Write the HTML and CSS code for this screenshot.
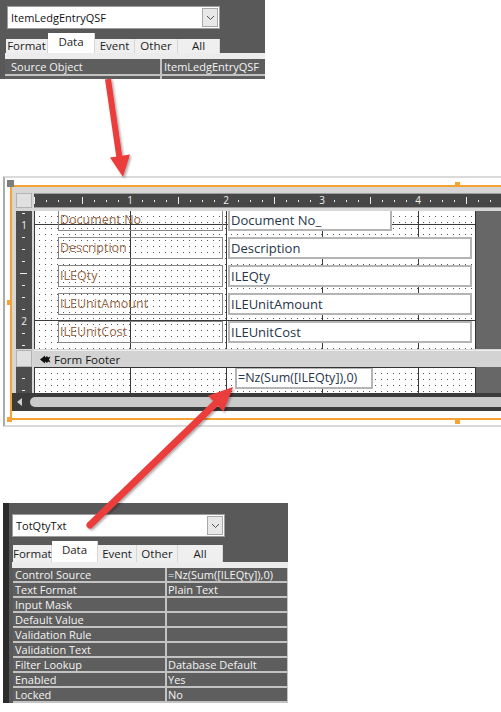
FILE: index.html
```html
<!DOCTYPE html>
<html>
<head>
<meta charset="utf-8">
<title>Access design view</title>
<link rel="stylesheet" href="styles.css">
</head>
<body>
<div class="page">
  <section class="props props-top">
    <div class="combo">
      <span class="combo-text">ItemLedgEntryQSF</span>
      <span class="combo-btn"><svg width="9" height="6" viewBox="0 0 9 6"><polyline points="1,1 4.5,4.5 8,1" fill="none" stroke="#555" stroke-width="1"/></svg></span>
    </div>
    <div class="tabs">
      <span class="tab t1">Format</span><span class="tab t2 active">Data</span><span class="tab t3">Event</span><span class="tab t4">Other</span><span class="tab t5">All</span>
    </div>
    <div class="strip"></div>
    <div class="plist">
      <span class="cell name">Source Object</span><span class="cell val">ItemLedgEntryQSF</span>
      <span class="cell name">Link Master Fields</span><span class="cell val">Document No</span>
    </div>
  </section>

  <section class="design">
    <div class="sel">
      <div class="win">
        <div class="rrow">
          <div class="corner"></div>
          <div class="hruler"><span class="rn">1</span><span class="rn">2</span><span class="rn">3</span><span class="rn">4</span></div>
        </div>
        <div class="sec detail">
          <div class="vruler"><span class="vn first">1</span><span class="vn second">2</span></div>
          <div class="grid">
            <div class="frow"><div class="lbl">Document No</div><div class="tb short">Document No_</div></div>
            <div class="frow"><div class="lbl">Description</div><div class="tb">Description</div></div>
            <div class="frow"><div class="lbl">ILEQty</div><div class="tb">ILEQty</div></div>
            <div class="frow"><div class="lbl">ILEUnitAmount</div><div class="tb">ILEUnitAmount</div></div>
            <div class="frow"><div class="lbl">ILEUnitCost</div><div class="tb">ILEUnitCost</div></div>
          </div>
          <div class="gutter"></div>
        </div>
        <div class="footbar">
          <div class="corner"></div>
          <div class="bar"><svg class="secicon" width="11" height="9" viewBox="0 0 11 9"><path d="M0 4.5 L5 0.5 L5 2.5 L7 1 L8 2.5 L10.5 1.5 L9 4.5 L10.5 7.5 L8 6.5 L7 8 L5 6.5 L5 8.5 Z" fill="#111"/></svg><span>Form Footer</span></div>
        </div>
        <div class="sec footer">
          <div class="vruler small"></div>
          <div class="grid fgrid"><div class="tb calc">=Nz(Sum([ILEQty]),0)</div></div>
          <div class="gutter"></div>
        </div>
        <div class="hscroll"><span class="sarrow"></span><span class="track"></span></div>
      </div>
    </div>
    <span class="tlsq"></span>
    <span class="handle h-top"></span>
    <span class="handle h-bot"></span>
    <span class="handle h-left"></span>
    <span class="handle h-bl"></span>
  </section>

  <section class="props props-bot">
    <div class="combo">
      <span class="combo-text">TotQtyTxt</span>
      <span class="combo-btn"><svg width="9" height="6" viewBox="0 0 9 6"><polyline points="1,1 4.5,4.5 8,1" fill="none" stroke="#555" stroke-width="1"/></svg></span>
    </div>
    <div class="tabs">
      <span class="tab t1">Format</span><span class="tab t2 active">Data</span><span class="tab t3">Event</span><span class="tab t4">Other</span><span class="tab t5">All</span>
    </div>
    <div class="strip"></div>
    <div class="plist">
      <span class="cell name">Control Source</span><span class="cell val">=Nz(Sum([ILEQty]),0)</span>
      <span class="cell name">Text Format</span><span class="cell val">Plain Text</span>
      <span class="cell name">Input Mask</span><span class="cell val"></span>
      <span class="cell name">Default Value</span><span class="cell val"></span>
      <span class="cell name">Validation Rule</span><span class="cell val"></span>
      <span class="cell name">Validation Text</span><span class="cell val"></span>
      <span class="cell name">Filter Lookup</span><span class="cell val">Database Default</span>
      <span class="cell name">Enabled</span><span class="cell val">Yes</span>
      <span class="cell name">Locked</span><span class="cell val">No</span>
    </div>
  </section>

  <svg class="arrows" width="501" height="712" viewBox="0 0 501 712">
    <defs>
      <filter id="sh" x="-30%" y="-30%" width="160%" height="160%">
        <feDropShadow dx="1.5" dy="1.5" stdDeviation="1.2" flood-color="#000" flood-opacity="0.35"/>
      </filter>
    </defs>
    <g filter="url(#sh)">
      <line x1="108" y1="79" x2="119.5" y2="158" stroke="#ec3d3d" stroke-width="6"/>
      <polygon points="123,177 130,154.5 110,157.5" fill="#ec3d3d"/>
      <line x1="90" y1="525" x2="217" y2="402" stroke="#ec3d3d" stroke-width="7" stroke-linecap="round"/>
      <polygon points="233,387 223.5,411.6 208.1,395.8" fill="#ec3d3d"/>
    </g>
  </svg>
</div>
</body>
</html>
```

FILE: styles.css
```css
* { box-sizing: border-box; }
html, body { margin: 0; padding: 0; background: #fff; }
body { font-family: "Open Sans", "Liberation Sans", sans-serif; }
.page { position: relative; width: 501px; height: 712px; overflow: hidden; }

/* ---------- property sheets ---------- */
.props { background: #595959; overflow: hidden; }
.combo { height: 23px; width: 213px; background: #fff; border: 1px solid #9d9d9d; display: flex; align-items: center; }
.combo-text { padding-left: 3px; font-size: 11px; color: #111; }
.combo-btn { margin-left: auto; margin-right: 1px; width: 16px; height: 19px; background: #e8e8e8; border: 1px solid #a9a9a9; display: flex; align-items: center; justify-content: center; }
.tabs { display: flex; align-items: flex-end; }
.tab { background: #efefef; border-right: 1px solid #d6d6d6; font-size: 11.5px; text-align: center; color: #1e1e1e; white-space: nowrap; }
.tab.active { background: #fff; }
.strip { height: 6px; background: #ececec; }
.plist { display: grid; background: #c3c3c3; row-gap: 2px; column-gap: 2px; }
.cell { background: #5e5e5e; color: #f3f3f3; font-size: 11px; white-space: nowrap; overflow: hidden; }

.props-top { width: 265px; height: 79px; padding-top: 6px; }
.props-top .combo { margin-left: 7px; }
.props-top .tabs { margin: 4px 0 0 6px; height: 20px; }
.props-top .tab { height: 14px; line-height: 14px; }
.props-top .tab.active { height: 20px; line-height: 17px; }
.props-top .t1 { width: 42px; }
.props-top .t2 { width: 47px; }
.props-top .t3 { width: 40px; }
.props-top .t4 { width: 43px; }
.props-top .t5 { width: 42px; }
.props-top .strip { margin-left: 5px; }
.props-top .plist { margin-left: 5px; grid-template-columns: 155px 103px; grid-auto-rows: 15px; }
.props-top .cell { line-height: 15px; }
.props-top .name { padding-left: 6px; }
.props-top .val { padding-left: 2px; }

.props-bot { margin: 76px 0 0 3px; width: 285px; height: 200px; border-left: 6px solid #2b2b2b; padding-top: 11px; }
.props-bot .combo { margin-left: 3px; }
.props-bot .tabs { margin: 3px 0 0 4px; height: 22px; }
.props-bot .tab { height: 17px; line-height: 17px; }
.props-bot .tab.active { height: 21px; line-height: 18px; }
.props-bot .t1 { width: 39px; }
.props-bot .t2 { width: 46px; }
.props-bot .t3 { width: 39px; }
.props-bot .t4 { width: 41px; }
.props-bot .t5 { width: 45px; }
.props-bot .strip { margin-left: 3px; }
.props-bot .plist { margin-left: 4px; grid-template-columns: 152px 120px; grid-auto-rows: 13px; border-bottom: 2px solid #c3c3c3; }
.props-bot .cell { line-height: 13px; }
.props-bot .name { padding-left: 2px; }
.props-bot .val { padding-left: 1px; }

/* ---------- design view ---------- */
.design { position: relative; margin: 97px 0 0 3px; width: 498px; height: 251px; background: #fff; border-top: 2px solid #dadada; border-bottom: 2px solid #dadada; border-left: 2px solid #ababab; }
.sel { margin: 7px 0 0 5px; height: 235px; border-top: 2px solid #f7a234; border-left: 2px solid #f7a234; border-bottom: 2px solid #f7a234; padding-bottom: 7px; }
.win { height: 224px; background: #d6d6d6; padding: 6px 0 0 4px; display: flex; flex-direction: column; }
.corner { width: 16px; flex: none; background: #e0e0e0; border: 1px solid #b3b3b3; }
.rrow { display: flex; gap: 2px; height: 15px; flex: none; }
.hruler {
  flex: 1; display: flex; background-color: #474747; border-top: 1px solid #9c9c9c; border-bottom: 1px solid #9c9c9c;
  background-image: linear-gradient(to right, #eee 1px, transparent 1px), linear-gradient(to right, #eee 1px, transparent 1px);
  background-size: 12px 2px, 48px 7px;
  background-repeat: repeat-x;
  background-position: 0 6px, 0 3px;
  padding-left: 91px;
}
.rn { width: 10px; margin-right: 86px; flex: none; text-align: center; background: #474747; color: #f0f0f0; font-size: 10px; line-height: 13px; }

.sec { display: flex; flex: none; }
.detail { margin-top: 3px; height: 138px; }
.footer { height: 26px; }
.vruler {
  width: 16px; flex: none; background-color: #4d4d4d;
  background-image: linear-gradient(to bottom, #eee 1px, transparent 1px), linear-gradient(to bottom, #eee 1px, transparent 1px);
  background-size: 3px 12px, 7px 48px;
  background-repeat: repeat-y;
  background-position: 6px 2px, 4px 14px;
  display: flex; flex-direction: column;
}
.vruler.small { background-image: linear-gradient(to bottom, #eee 1px, transparent 1px); background-size: 3px 12px; background-position: 6px 11px; }
.vn { height: 12px; line-height: 12px; text-align: center; background: #4d4d4d; color: #f0f0f0; font-size: 10px; }
.vn.first { margin-top: 8px; }
.vn.second { margin-top: 84px; }
.grid {
  width: 442px; flex: none; margin-left: 2px; overflow: hidden; border-right: 1px solid #333;
  background-color: #fff;
  background-image:
    linear-gradient(to right, transparent 95px, #3a3a3a 95px, #3a3a3a 96px, transparent 96px),
    linear-gradient(to bottom, transparent 13px, #3a3a3a 13px, #3a3a3a 14px, transparent 14px),
    linear-gradient(to right, #fff 5px, transparent 5px),
    linear-gradient(to bottom, #fff 5px, #555 5px);
  background-size: 96px 100%, 100% 96px, 6px 6px, 6px 6px;
  background-position: 1px 0, 0 0, 0 0, 0 0;
  display: flex; flex-direction: column; gap: 6px;
}
.fgrid {
  border-top: 1px solid #333;
  background-image:
    linear-gradient(to right, transparent 95px, #3a3a3a 95px, #3a3a3a 96px, transparent 96px),
    linear-gradient(to right, #fff 5px, transparent 5px),
    linear-gradient(to bottom, #fff 5px, #555 5px);
  background-size: 96px 100%, 6px 6px, 6px 6px;
  background-position: 1px 0, 0 0, 0 0;
}
.gutter { flex: 1; background: #676767; }
.frow { display: flex; height: 22px; flex: none; gap: 5px; }
.frow:first-child { margin-top: -2px; }
.lbl { margin-left: 24px; width: 165px; height: 22px; border: 1px solid #858585; color: #96694a; font-size: 12.5px; line-height: 20px; padding-left: 1px; white-space: nowrap; }
.tb { width: 244px; height: 22px; background: #fff; border: 2px solid #b4b4b4; color: #27364a; font-size: 13px; line-height: 18px; padding-left: 1px; white-space: nowrap; }
.tb.short { width: 164px; }
.tb.calc { margin-left: 201px; width: 138px; margin-top: -1px; font-size: 12.5px; }

.footbar { display: flex; gap: 2px; height: 17px; margin-top: 1px; flex: none; }
.bar { flex: 1; background: #d3d3d3; border-top: 1px solid #ededed; display: flex; align-items: center; gap: 3px; padding-left: 6px; font-size: 11.5px; color: #151515; }
.secicon { flex: none; }

.hscroll { margin-left: -4px; height: 18px; flex: none; background: #3b3b3b; display: flex; align-items: center; padding-left: 5px; }
.sarrow { width: 0; height: 0; border-top: 4px solid transparent; border-bottom: 4px solid transparent; border-right: 5px solid #cfcfcf; }
.track { margin-left: 8px; flex: 1; height: 10px; background: #cacaca; border-radius: 5px 0 0 5px; }

.tlsq { position: absolute; left: 2px; top: 2px; width: 7px; height: 7px; background: #7d7d7d; }
.handle { position: absolute; width: 5px; height: 5px; background: #f7a234; }
.h-top { left: 450px; top: 4px; }
.h-bot { left: 450px; top: 241px; }
.h-left { left: 2px; top: 122px; }
.h-bl { left: 2px; top: 239px; }

.arrows { position: absolute; left: 0; top: 0; pointer-events: none; }
```
